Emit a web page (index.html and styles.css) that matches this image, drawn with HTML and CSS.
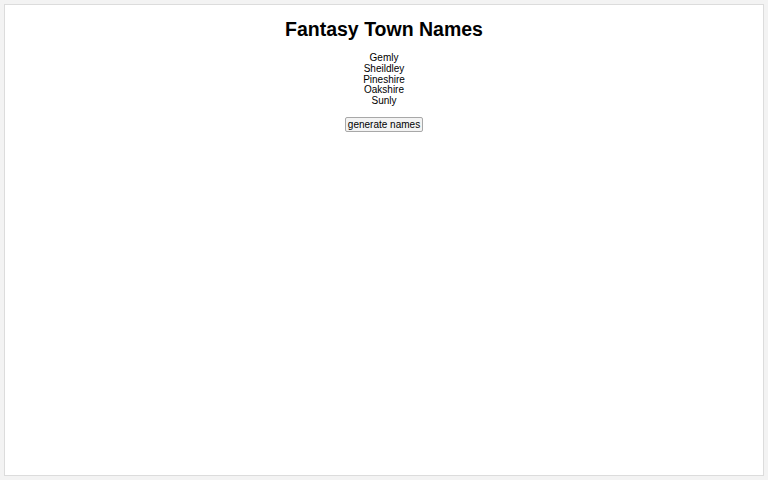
FILE: index.html
```html
<!DOCTYPE html>
<html lang="en">
<head>
    <meta charset="UTF-8">
    <meta name="viewport" content="width=device-width, initial-scale=1.0">
    <title>Fantasy Town Names</title>
    <link rel="stylesheet" href="styles.css">
</head>
<body>
    <div class="container">
        <h1>Fantasy Town Names</h1>
        <ul id="names">
            <li>Gemly</li>
            <li>Sheildley</li>
            <li>Pineshire</li>
            <li>Oakshire</li>
            <li>Sunly</li>
        </ul>
        <button type="button" id="generate">generate names</button>
    </div>
</body>
</html>
```

FILE: styles.css
```css
html, body {
    height: 100%;
}
body {
    font-family: "Liberation Sans", Arial, sans-serif;
    margin: 0;
    padding: 4px;
    box-sizing: border-box;
    background-color: #f3f3f3;
}
.container {
    height: 100%;
    box-sizing: border-box;
    padding-top: 13px;
    background-color: white;
    border: 1px solid #dcdcdc;
    text-align: center;
}
h1 {
    margin: 0 0 13px;
    font-size: 19.5px;
    line-height: 22px;
    color: #000;
}
ul {
    list-style: none;
    margin: 0 0 7px;
    padding: 0;
    font-size: 10px;
    line-height: 10.8px;
}
button {
    font-family: "Liberation Sans", Arial, sans-serif;
    font-size: 10px;
    padding: 1px 2px;
    background-color: #f3f3f3;
    border: 1px solid #a8a8a8;
    border-radius: 2px;
}
```
